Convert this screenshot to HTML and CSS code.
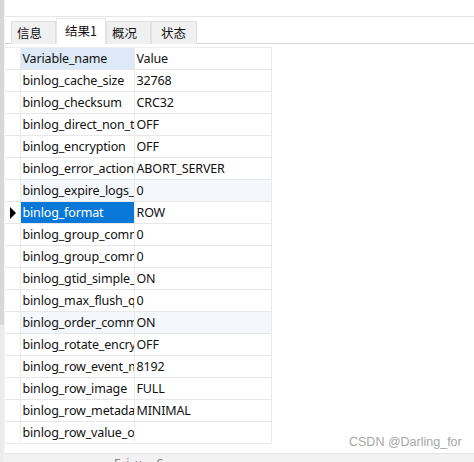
FILE: index.html
```html
<!DOCTYPE html>
<html>
<head>
<meta charset="utf-8">
<link rel="stylesheet" href="styles.css">
</head>
<body>
<div class="app">
  <div class="strip"></div>
  <div class="main">
    <div class="topgap"></div>
    <div class="tabbar">
      <div class="tab">信息</div>
      <div class="tab active">结果1</div>
      <div class="tab">概况</div>
      <div class="tab">状态</div>
    </div>
    <div class="content">
      <table class="grid">
        <colgroup><col class="c-ind"><col class="c-name"><col class="c-val"></colgroup>
        <thead>
          <tr><th class="ind"></th><th class="name sorted">Variable_name</th><th class="val">Value</th></tr>
        </thead>
        <tbody>
          <tr><td class="ind"></td><td class="name">binlog_cache_size</td><td class="val">32768</td></tr>
          <tr><td class="ind"></td><td class="name">binlog_checksum</td><td class="val">CRC32</td></tr>
          <tr><td class="ind"></td><td class="name">binlog_direct_non_transactional_updates</td><td class="val">OFF</td></tr>
          <tr><td class="ind"></td><td class="name">binlog_encryption</td><td class="val">OFF</td></tr>
          <tr><td class="ind"></td><td class="name">binlog_error_action</td><td class="val">ABORT_SERVER</td></tr>
          <tr class="tint"><td class="ind"></td><td class="name">binlog_expire_logs_seconds</td><td class="val">0</td></tr>
          <tr class="current"><td class="ind"><span class="arrow"></span></td><td class="name sel">binlog_format</td><td class="val">ROW</td></tr>
          <tr><td class="ind"></td><td class="name">binlog_group_commit_sync_delay</td><td class="val">0</td></tr>
          <tr><td class="ind"></td><td class="name">binlog_group_commit_sync_no_delay_count</td><td class="val">0</td></tr>
          <tr><td class="ind"></td><td class="name">binlog_gtid_simple_recovery</td><td class="val">ON</td></tr>
          <tr><td class="ind"></td><td class="name">binlog_max_flush_queue_time</td><td class="val">0</td></tr>
          <tr class="tint"><td class="ind"></td><td class="name">binlog_order_commits</td><td class="val">ON</td></tr>
          <tr><td class="ind"></td><td class="name">binlog_rotate_encryption_master_key_at_startup</td><td class="val">OFF</td></tr>
          <tr><td class="ind"></td><td class="name">binlog_row_event_max_size</td><td class="val">8192</td></tr>
          <tr><td class="ind"></td><td class="name">binlog_row_image</td><td class="val">FULL</td></tr>
          <tr><td class="ind"></td><td class="name">binlog_row_metadata</td><td class="val">MINIMAL</td></tr>
          <tr><td class="ind"></td><td class="name">binlog_row_value_options</td><td class="val"></td></tr>
        </tbody>
      </table>
      <div class="watermark">CSDN @Darling_for</div>
    </div>
    <div class="footer"><span class="foot-text">Fix S</span></div>
  </div>
</div>
</body>
</html>
```

FILE: styles.css
```css
* { box-sizing: border-box; }
html, body { margin: 0; padding: 0; background: #fff; }
body {
  font-family: "Noto Sans", "Noto Sans CJK SC", sans-serif;
  font-size: 12px;
  color: #111;
  width: 474px;
  height: 462px;
  overflow: hidden;
}
.app { display: flex; height: 462px; }
.strip {
  width: 5px;
  flex: none;
  background: linear-gradient(#d8d8d8 0, #d8d8d8 325px, #ececec 325px);
  border-right: 1px solid #f4f4f4;
}
.main { flex: 1; display: flex; flex-direction: column; min-width: 0; }
.topgap { height: 17px; border-bottom: 1px solid #e6e6e6; flex: none; }
.tabbar {
  height: 27px;
  flex: none;
  display: flex;
  align-items: flex-end;
  padding-left: 6px;
  background: #fff;
  border-bottom: 1px solid #dadada;
}
.tab {
  height: 23px;
  padding: 0 0 0 5px;
  width: 45px;
  background: #f0f0f0;
  border: 1px solid #e0e0e0;
  border-bottom: none;
  margin-bottom: -1px;
  line-height: 22px;
  font-size: 12.5px;
  color: #111;
  font-family: "Noto Sans CJK SC", sans-serif;
}
.tab.active {
  height: 26px;
  width: 50px;
  background: #fff;
  padding-left: 8px;
  line-height: 24px;
  border-color: #e6e6e6;
}
.tab:nth-child(3) { width: 45px; }
.tab:nth-child(4) { width: 46px; padding-left: 9px; }
.content { flex: 1; padding-top: 3px; position: relative; }
.grid {
  border-collapse: collapse;
  table-layout: fixed;
  width: 266px;
}
.c-ind { width: 15px; }
.c-name { width: 114px; }
.c-val { width: 137px; }
.grid th, .grid td {
  height: 22px;
  padding: 0 0 0 2px;
  border-bottom: 1px solid #e8e8e8;
  border-right: 1px solid #ebebeb;
  white-space: nowrap;
  overflow: hidden;
  text-overflow: clip;
  text-align: left;
  font-weight: normal;
  font-size: 12.5px;
  letter-spacing: -0.15px;
  color: #111;
}
.grid th { border-top: 1px solid #ececec; }
.grid th.sorted { background: #dde9f6; }
.grid th.ind, .grid td.ind { padding: 0; position: relative; }
.grid tr.tint td.name, .grid tr.tint td.val { background: #f4f8fc; }
.grid td.sel { background: #0a78d8; color: #fff; }
.arrow {
  position: absolute;
  left: 5px;
  top: 5px;
  width: 0; height: 0;
  border-top: 6px solid transparent;
  border-bottom: 6px solid transparent;
  border-left: 6px solid #000;
}
.watermark {
  position: absolute;
  left: 344px;
  top: 391px;
  font-family: "Liberation Sans", Arial, sans-serif;
  font-size: 12.5px;
  color: #a6a6a6;
}
.footer {
  height: 9px;
  flex: none;
  background: #f2f2f2;
  border-top: 1px solid #e4e4e4;
  overflow: hidden;
  position: relative;
}
.foot-text {
  position: absolute;
  left: 109px;
  top: 1px;
  font-size: 12px;
  color: #888;
  letter-spacing: 6px;
}
```
